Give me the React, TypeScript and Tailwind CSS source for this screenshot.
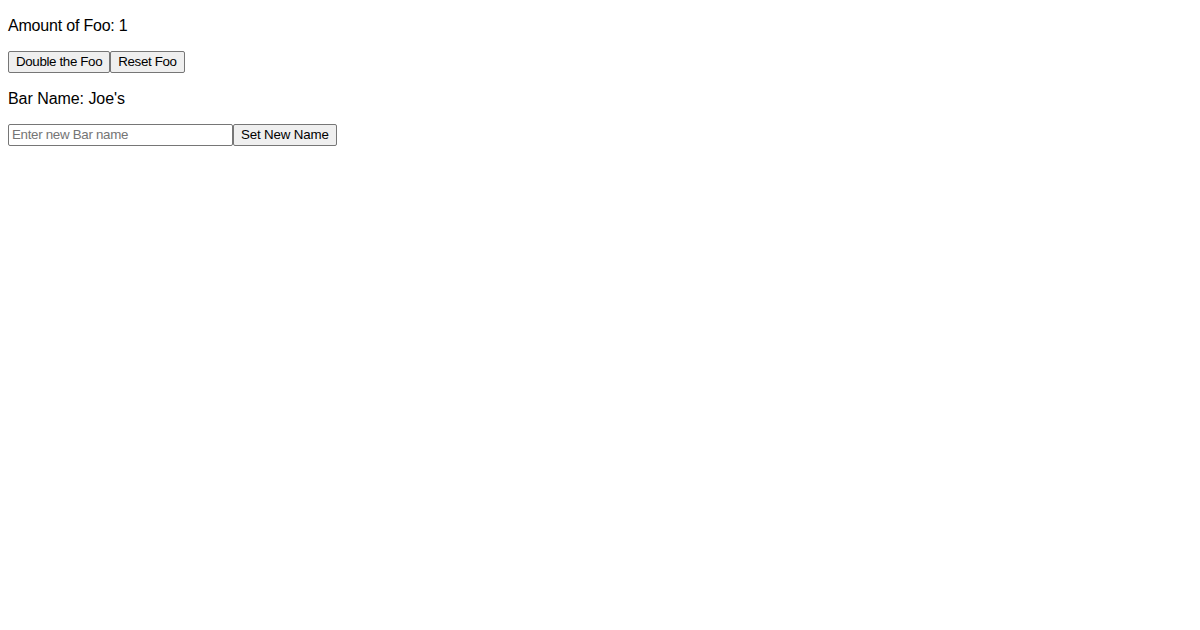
import React, { useState } from 'react';

export default function App() {
  const [foo, setFoo] = useState(1);
  const [barName, setBarName] = useState("Joe's");
  const [draft, setDraft] = useState('');

  const btn =
    'h-[22px] rounded-[2px] border border-[#767676] bg-[#efefef] px-[7px] text-[13.33px] leading-[16px] text-black';

  return (
    <div className="min-h-screen bg-white px-2 pt-[17px] font-['Liberation_Sans',Arial,sans-serif] text-black">
      <p className="text-base leading-[18px] tracking-[-0.2px]">Amount of Foo: {foo}</p>
      <div className="mt-4 flex">
        <button className={`${btn} tracking-[-0.35px]`} onClick={() => setFoo((f) => f * 2)}>
          Double the Foo
        </button>
        <button className={`${btn} tracking-[-0.35px]`} onClick={() => setFoo(1)}>
          Reset Foo
        </button>
      </div>
      <p className="mt-[17px] text-base leading-[18px] tracking-[-0.05px]">Bar Name: {barName}</p>
      <div className="mt-4 flex">
        <input
          value={draft}
          onChange={(e) => setDraft(e.target.value)}
          placeholder="Enter new Bar name"
          className="h-[22px] w-[225px] rounded-[2px] border border-[#767676] bg-white px-[3px] pb-[2px] text-[13.33px] tracking-[-0.3px] text-black placeholder:text-[#757575] focus:outline-none"
        />
        <button
          className={`${btn} tracking-[-0.15px]`}
          onClick={() => {
            if (draft.trim()) setBarName(draft.trim());
            setDraft('');
          }}
        >
          Set New Name
        </button>
      </div>
    </div>
  );
}
